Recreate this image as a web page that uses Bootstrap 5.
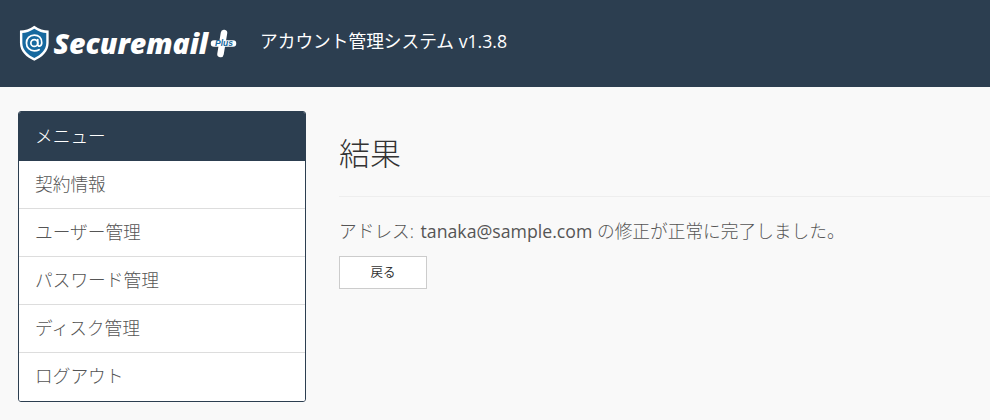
<!DOCTYPE html>
<html lang="ja">
<head>
<meta charset="utf-8">
<title>Securemail Plus</title>
<link rel="stylesheet" href="https://cdn.jsdelivr.net/npm/bootstrap@5.3.0/dist/css/bootstrap.min.css">
<style>
html,body{height:420px;overflow:hidden}
body{background:#f9f9f9;font-family:"Open Sans","Noto Sans CJK JP",sans-serif;color:#555;font-size:16px}
.site-head{height:87px;background:#2c3e50;color:#fff;padding-left:19px}
.logo-box{width:218px;height:40px;margin-top:-1px}
.logo-word{font-family:"Open Sans",sans-serif;font-weight:800;font-style:italic;font-size:28.5px;line-height:40px;letter-spacing:-.1px;color:#fff}
.plus-cross{width:27px;height:29px;flex:none;margin-left:2px;margin-top:1px}
.plus-tag{top:15px;left:196px;font-size:8.5px;line-height:10px;font-weight:700;font-style:italic;color:#17699f;font-family:"Liberation Sans",sans-serif}
.sys-title{margin-left:23px;font-size:17.7px;margin-top:-4px;font-weight:400;color:#fff}
.page-body{padding:24px 0 0 18px}
.side-panel{width:288px;flex:none;border:1px solid #2c3e50;border-radius:3px;background:#fff;overflow:hidden;--bs-list-group-border-radius:0}
.side-panel .panel-top{height:49px;background:#2c3e50;color:#fff;padding:0 16px;font-size:17.7px;line-height:49px;font-weight:300}
.side-panel .list-group-item{height:48px;padding:0 16px;line-height:47px;font-size:17.7px;font-weight:300;color:#555;border-color:#ddd;border-left:0;border-right:0}
.side-panel .list-group-item:first-child{border-top:0}
.side-panel .list-group-item:last-child{border-bottom:0}
.main-area{margin-left:33px;flex:1 1 auto}
.result-title{font-size:31px;line-height:36px;margin:23px 0 26px;color:#333;font-family:"Noto Sans CJK JP",sans-serif;font-weight:300}
.result-rule{margin:0 0 21px;border:0;border-top:1px solid #eee;opacity:1}
.result-msg{line-height:26px;margin:0 0 12px;font-weight:300;font-size:17.7px;color:#555}
.result-msg .mail{font-weight:400;margin-left:2px}
.back-btn{width:88px;height:33px;padding:0;font-size:12.5px;line-height:31px;color:#333;background:#fff;border:1px solid #ccc;border-radius:0}
</style>
</head>
<body>
<header class="site-head d-flex align-items-center">
  <div class="logo-box d-flex align-items-center position-relative">
    <svg width="32" height="38" viewBox="0 0 32 38" class="me-1 flex-none" aria-hidden="true">
      <path d="M16 1 C21 4.5 26 6 31 6 V19 C31 28 24 34 16 37.5 C8 34 1 28 1 19 V6 C6 6 11 4.5 16 1Z" fill="#fff"/>
      <path d="M16 4 C20.500 7 25 8.300 28.500 8.500 V19 C28.500 26.500 22.500 31.500 16 34.700 C9.500 31.500 3.500 26.500 3.500 19 V8.500 C7 8.300 11.500 7 16 4Z" fill="#17699f"/>
      <circle cx="16" cy="19" r="3.600" fill="none" stroke="#fff" stroke-width="1.800"/>
      <path d="M19.600 15.500 V20.500 C19.600 23 23.500 23 23.800 19 C24.200 13.500 20.500 10.800 16 10.800 C11 10.800 7.800 14.500 7.800 19 C7.800 24 11.500 27.200 16 27.200 C18 27.200 19.500 26.800 21 26" fill="none" stroke="#fff" stroke-width="1.800" stroke-linecap="round"/>
    </svg>
    <span class="logo-word">Securemail</span>
    <svg class="plus-cross" viewBox="0 0 27 29" aria-hidden="true">
      <path d="M14 4 L10.500 25 M4 14.500 H23" fill="none" stroke="#fff" stroke-width="6.500" stroke-linecap="round"/>
    </svg>
    <span class="plus-tag position-absolute">Plus</span>
  </div>
  <div class="sys-title">アカウント管理システム v1.3.8</div>
</header>
<div class="page-body d-flex align-items-start">
  <nav class="side-panel">
    <div class="panel-top">メニュー</div>
    <div class="list-group list-group-flush">
      <a href="#" class="list-group-item list-group-item-action">契約情報</a>
      <a href="#" class="list-group-item list-group-item-action">ユーザー管理</a>
      <a href="#" class="list-group-item list-group-item-action">パスワード管理</a>
      <a href="#" class="list-group-item list-group-item-action">ディスク管理</a>
      <a href="#" class="list-group-item list-group-item-action">ログアウト</a>
    </div>
  </nav>
  <main class="main-area">
    <h1 class="result-title">結果</h1>
    <hr class="result-rule">
    <p class="result-msg">アドレス: <span class="mail">tanaka@sample.com</span> の修正が正常に完了しました。</p>
    <button type="button" class="btn back-btn">戻る</button>
  </main>
</div>
<script src="https://cdn.jsdelivr.net/npm/bootstrap@5.3.0/dist/js/bootstrap.bundle.min.js"></script>
</body>
</html>
